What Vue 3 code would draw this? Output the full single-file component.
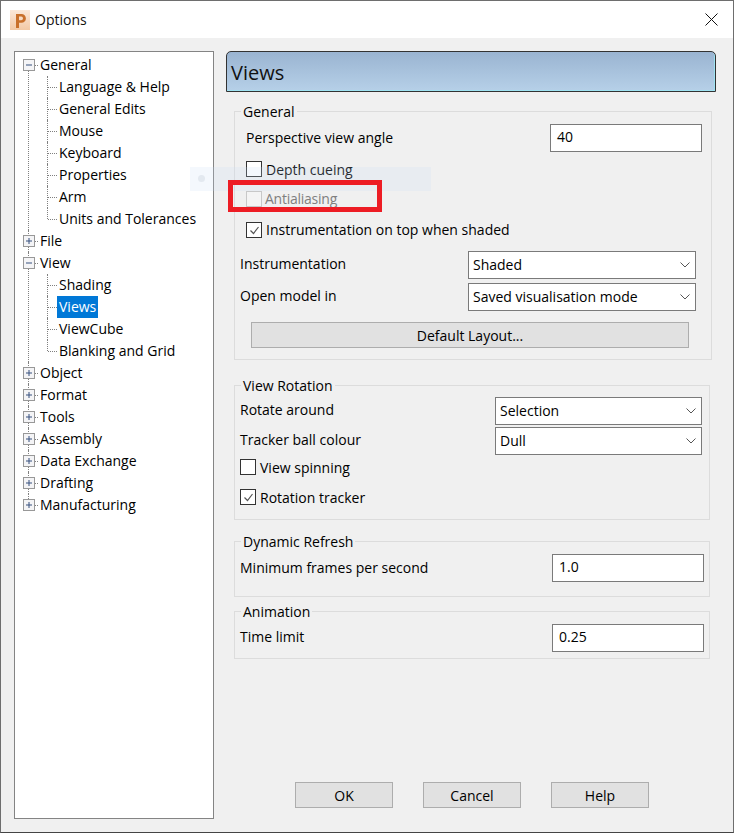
<script setup>
const tree = [
  { name: 'General', open: true, kids: ['Language & Help', 'General Edits', 'Mouse', 'Keyboard', 'Properties', 'Arm', 'Units and Tolerances'] },
  { name: 'File' },
  { name: 'View', open: true, kids: ['Shading', 'Views', 'ViewCube', 'Blanking and Grid'] },
  { name: 'Object' },
  { name: 'Format' },
  { name: 'Tools' },
  { name: 'Assembly' },
  { name: 'Data Exchange' },
  { name: 'Drafting' },
  { name: 'Manufacturing' },
]
</script>

<template>
  <div class="window">
    <header class="titlebar">
      <svg class="logo" width="20" height="20" viewBox="0 0 20 20">
        <defs>
          <linearGradient id="lg" x1="0" y1="0" x2="0" y2="1">
            <stop offset="0" stop-color="#fbe8d8" />
            <stop offset="1" stop-color="#f3c9a5" />
          </linearGradient>
        </defs>
        <rect width="20" height="20" fill="url(#lg)" />
        <path d="M6 18V4h5.5a4.4 4.4 0 0 1 0 8.8H9V18z M9 6.6v3.6h2.2a1.8 1.8 0 0 0 0-3.6z" fill="#c9702a" fill-rule="evenodd" />
      </svg>
      <span class="title">Options</span>
      <svg class="close" width="13" height="13" viewBox="0 0 13 13">
        <path d="M.5.5l12 12M12.5.5l-12 12" stroke="#111" stroke-width="1" fill="none" />
      </svg>
    </header>

    <div class="body">
      <ul class="tree">
        <li v-for="n in tree" :key="n.name" class="node">
          <div class="row">
            <svg class="exp" width="12" height="12" viewBox="0 0 12 12">
              <rect x=".5" y=".5" width="11" height="11" fill="#f4f4f6" stroke="#989898" />
              <path d="M3 6h6" stroke="#37507f" />
              <path v-if="!n.open" d="M6 3v6" stroke="#37507f" />
            </svg>
            <span class="stub top"></span>
            <span class="label">{{ n.name }}</span>
          </div>
          <ul v-if="n.kids" class="kids">
            <li v-for="k in n.kids" :key="k" class="kid">
              <span class="stub"></span>
              <span class="label" :class="{ sel: k === 'Views' }">{{ k }}</span>
            </li>
          </ul>
        </li>
      </ul>

      <main class="panel">
        <h1 class="heading">Views</h1>

        <section class="group g-general">
          <div class="legend">General</div>
          <div class="row-f first">
            <span>Perspective view angle</span>
            <div class="input">40</div>
          </div>
          <label class="check c1"><i class="box"></i>Depth cueing</label>
          <label class="check c2 off"><i class="box"></i>Antialiasing</label>
          <label class="check c3">
            <i class="box"><svg width="13" height="13" viewBox="0 0 13 13"><path d="M2.5 6.5l3 3 5-6.5" stroke="#555" stroke-width="1.2" fill="none" /></svg></i>Instrumentation on top when shaded
          </label>
          <div class="row-s s1">
            <span>Instrumentation</span>
            <div class="select w228">Shaded<svg class="chev" width="10" height="6" viewBox="0 0 10 6"><path d="M.5.5L5 5 9.5.5" stroke="#555" fill="none" /></svg></div>
          </div>
          <div class="row-s s2">
            <span>Open model in</span>
            <div class="select w228">Saved visualisation mode<svg class="chev" width="10" height="6" viewBox="0 0 10 6"><path d="M.5.5L5 5 9.5.5" stroke="#555" fill="none" /></svg></div>
          </div>
          <button class="btn wide">Default Layout...</button>
        </section>

        <section class="group g-rot">
          <div class="legend">View Rotation</div>
          <div class="row-r r1">
            <span>Rotate around</span>
            <div class="select w207">Selection<svg class="chev" width="10" height="6" viewBox="0 0 10 6"><path d="M.5.5L5 5 9.5.5" stroke="#555" fill="none" /></svg></div>
          </div>
          <div class="row-r r2">
            <span>Tracker ball colour</span>
            <div class="select w207">Dull<svg class="chev" width="10" height="6" viewBox="0 0 10 6"><path d="M.5.5L5 5 9.5.5" stroke="#555" fill="none" /></svg></div>
          </div>
          <label class="check n c4"><i class="box"></i>View spinning</label>
          <label class="check n c5">
            <i class="box"><svg width="13" height="13" viewBox="0 0 13 13"><path d="M2.5 6.5l3 3 5-6.5" stroke="#555" stroke-width="1.2" fill="none" /></svg></i>Rotation tracker
          </label>
        </section>

        <section class="group g-dyn">
          <div class="legend">Dynamic Refresh</div>
          <div class="row-n">
            <span>Minimum frames per second</span>
            <div class="input">1.0</div>
          </div>
        </section>

        <section class="group g-anim">
          <div class="legend">Animation</div>
          <div class="row-n tl">
            <span>Time limit</span>
            <div class="input">0.25</div>
          </div>
        </section>

        <footer class="actions">
          <button class="btn act">OK</button>
          <button class="btn act">Cancel</button>
          <button class="btn act">Help</button>
        </footer>
      </main>
    </div>

    <div class="ghost"><i class="dot"></i></div>
    <div class="redbox"></div>
  </div>
</template>

<style>
html, body { margin: 0; padding: 0; }
</style>

<style scoped>
.window {
  position: relative;
  box-sizing: border-box;
  width: 734px;
  height: 833px;
  display: flex;
  flex-direction: column;
  background: #f0f0f0;
  border: 1px solid #6e6e6e;
  border-bottom-color: #444;
  font-family: "Open Sans", "Noto Sans", sans-serif;
  font-size: 14px;
  color: #000;
  overflow: hidden;
}
.titlebar {
  height: 37px;
  flex: none;
  background: #fff;
  display: flex;
  align-items: center;
  padding: 0 15px 0 9px;
}
.title { margin-left: 5px; font-size: 14px; color: #111; }
.close { margin-left: auto; }
.body {
  flex: 1;
  display: flex;
  gap: 12px;
  padding: 13px 17px 13px 13px;
  min-height: 0;
}
.tree {
  box-sizing: border-box;
  width: 200px;
  flex: none;
  margin: 0;
  padding: 2px 0 0;
  list-style: none;
  background: #fff;
  border: 1px solid #848484;
}
.node { position: relative; }
.node::before {
  content: "";
  position: absolute;
  left: 13px;
  top: 0;
  height: 100%;
  border-left: 1px dotted #808080;
}
.node:first-child::before { top: 11px; height: calc(100% - 11px); }
.node:last-child::before { height: 11px; }
.row {
  position: relative;
  height: 22px;
  display: flex;
  align-items: center;
  padding-left: 8px;
}
.exp { flex: none; position: relative; }
.stub {
  flex: none;
  width: 9px;
  height: 0;
  border-top: 1px dotted #808080;
}
.stub.top { width: 3px; }
.label {
  height: 22px;
  line-height: 21px;
  padding: 0 2px;
  white-space: nowrap;
}
.label.sel { background: #0078d7; color: #fff; }
.kids { margin: 0; padding: 0; list-style: none; }
.kid {
  position: relative;
  height: 22px;
  display: flex;
  align-items: center;
  padding-left: 33px;
}
.kid::before {
  content: "";
  position: absolute;
  left: 32px;
  top: 0;
  height: 100%;
  border-left: 1px dotted #808080;
}
.kid:last-child::before { height: 11px; }

.panel {
  flex: 1;
  min-width: 0;
  display: flex;
  flex-direction: column;
}
.heading {
  box-sizing: border-box;
  height: 41px;
  margin: 0;
  padding-left: 4px;
  font-size: 20px;
  font-weight: 400;
  line-height: 41px;
  color: #111;
  background: linear-gradient(#9ab4d1, #b6d0e8);
  border: 1px solid #333;
  border-radius: 5px 5px 0 0;
  box-shadow: inset -1px -1px 0 #9fe3f2;
}
.group {
  position: relative;
  box-sizing: border-box;
  margin-left: 8px;
  border: 1px solid #dcdcdc;
}
.legend {
  width: fit-content;
  margin: -10px 0 0 6px;
  padding: 0 2px;
  height: 20px;
  line-height: 20px;
  background: #f0f0f0;
}
.g-general { width: 478px; height: 249px; margin-top: 19px; }
.g-rot { width: 476px; height: 135px; margin-top: 25px; }
.g-dyn { width: 476px; height: 56px; margin-top: 21px; }
.g-anim { width: 476px; height: 48px; margin-top: 14px; }

.row-f, .row-s, .row-r, .row-n {
  display: flex;
  align-items: center;
  justify-content: space-between;
}
.row-f > span, .row-n > span { margin-bottom: 2px; }
.row-s > span, .row-r > span, .row-n.tl > span { margin-bottom: 4px; }
.row-f { padding: 0 9px 0 11px; margin-top: 2px; }
.row-s { padding: 0 15px 0 5px; }
.s1 { margin-top: 12px; }
.s2 { margin-top: 4px; }
.row-r { padding: 0 7px 0 5px; }
.r1 { margin-top: 1px; }
.r2 { margin-top: 2px; }
.row-n { padding: 0 5px; margin-top: 2px; }

.input {
  box-sizing: border-box;
  width: 152px;
  height: 28px;
  line-height: 23px;
  padding-left: 6px;
  background: #fff;
  border: 1px solid #7a7a7a;
}
.select {
  position: relative;
  box-sizing: border-box;
  height: 28px;
  line-height: 26px;
  padding-left: 4px;
  background: #fff;
  border: 1px solid #7a7a7a;
}
.w228 { width: 228px; }
.w207 { width: 207px; }
.chev { position: absolute; right: 5px; top: 10px; }

.check {
  display: flex;
  align-items: center;
  height: 20px;
  padding-left: 11px;
}
.check.n { padding-left: 5px; }
.c1 { margin-top: 7px; }
.c2 { margin-top: 9px; letter-spacing: -0.25px; }
.c2 .box { margin-top: 2px; }
.c3 { margin-top: 11px; }
.c3 .box { margin-top: 2px; }
.c4 { margin-top: 2px; }
.c5 { margin-top: 10px; }
.box {
  box-sizing: border-box;
  flex: none;
  width: 16px;
  height: 16px;
  margin-right: 4px;
  background: #fff;
  border: 1px solid #333;
  display: flex;
  align-items: center;
  justify-content: center;
}
.off { color: #7f7f7f; }
.off .box { background: #f4f4f4; border-color: #c8c8c8; margin-right: 3px; }

.btn {
  box-sizing: border-box;
  font: inherit;
  color: #000;
  background: #e1e1e1;
  border: 1px solid #adadad;
  padding: 0;
}
.wide { display: block; width: 438px; height: 26px; margin: 11px 0 0 16px; }
.actions {
  margin-top: auto;
  padding: 0 0 11px 69px;
  display: flex;
  gap: 30px;
}
.act { width: 98px; height: 26px; }

.ghost {
  position: absolute;
  left: 189px;
  top: 166px;
  width: 241px;
  height: 24px;
  background: rgba(200, 222, 245, 0.2);
}
.dot {
  position: absolute;
  left: 8px;
  top: 8px;
  width: 7px;
  height: 7px;
  border-radius: 50%;
  background: #e3e9f0;
}
.redbox {
  position: absolute;
  box-sizing: border-box;
  left: 227px;
  top: 179px;
  width: 154px;
  height: 32px;
  border: 5px solid #ed1c24;
}
</style>
